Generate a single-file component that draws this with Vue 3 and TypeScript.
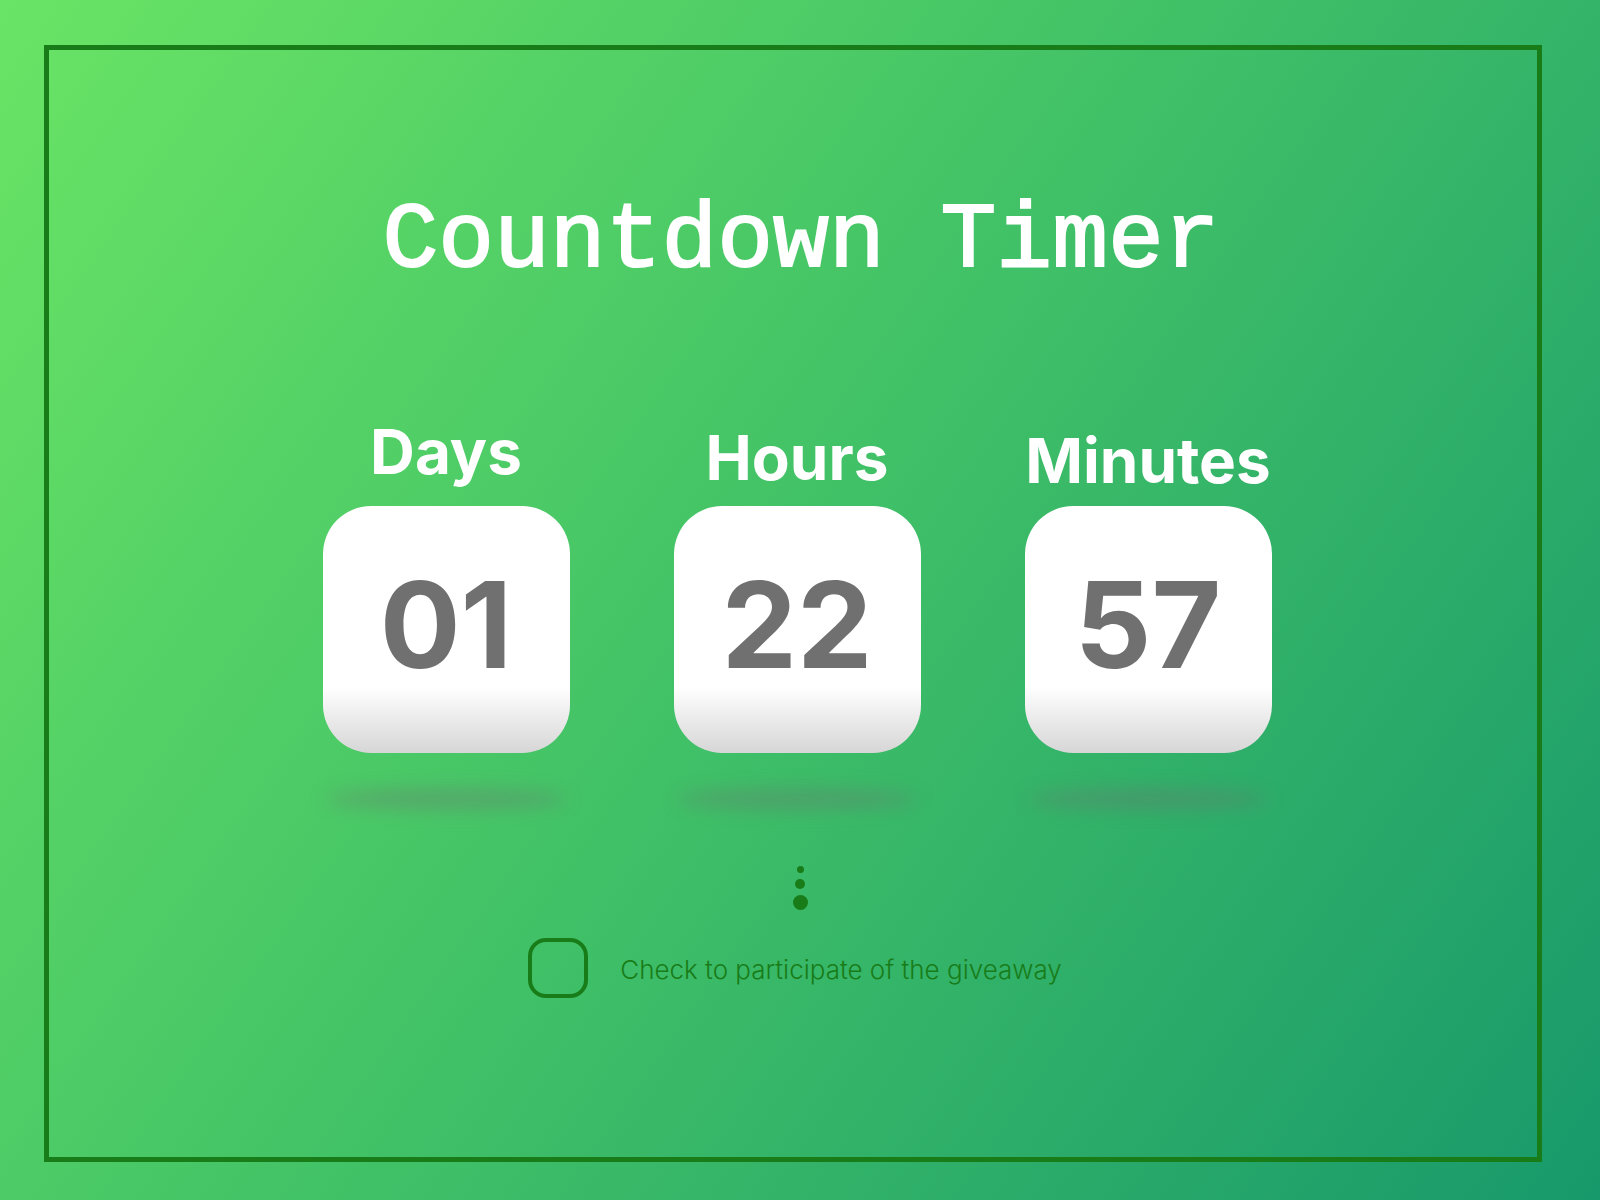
<script setup lang="ts">
import { ref } from 'vue'

interface Unit {
  label: string
  value: string
  step: 'high' | 'mid' | 'low'
}

const units: Unit[] = [
  { label: 'Days', value: '01', step: 'high' },
  { label: 'Hours', value: '22', step: 'mid' },
  { label: 'Minutes', value: '57', step: 'low' },
]

const participates = ref(false)
</script>

<template>
  <div class="page">
    <main class="frame">
      <h1 class="title">Countdown Timer</h1>

      <section class="units" aria-label="Time left">
        <div v-for="unit in units" :key="unit.label" class="unit">
          <h2 class="label" :class="unit.step">{{ unit.label }}</h2>
          <div class="card">{{ unit.value }}</div>
          <div class="shadow" aria-hidden="true"></div>
        </div>
      </section>

      <div class="dots" aria-hidden="true">
        <span class="dot small"></span>
        <span class="dot medium"></span>
        <span class="dot large"></span>
      </div>

      <label class="giveaway" for="giveaway">
        <input id="giveaway" v-model="participates" class="check" type="checkbox" />
        <span class="caption">Check to participate of the giveaway</span>
      </label>
    </main>
  </div>
</template>

<style>
body {
  margin: 0;
}
</style>

<style scoped>
.page {
  display: flex;
  box-sizing: border-box;
  min-height: 100vh;
  padding: 45px 58px 38px 44px;
  background: linear-gradient(125deg, #6ae465 0%, #40c067 50%, #18996b 100%);
  font-family: Inter, 'Liberation Sans', sans-serif;
}

.frame {
  display: flex;
  flex: 1;
  flex-direction: column;
  align-items: center;
  padding: 140px 0 40px;
  border: 5px solid #187c18;
}

.title {
  margin: 0 0 124px 16px;
  color: #fff;
  font-family: 'Liberation Mono', monospace;
  font-size: 93px;
  font-weight: 400;
  line-height: 104px;
  white-space: nowrap;
  -webkit-text-stroke: 2px #fff;
}

.units {
  display: flex;
  gap: 104px;
  margin-left: 8px;
}

.unit {
  display: flex;
  flex-direction: column;
  align-items: center;
  width: 247px;
}

.label {
  display: flex;
  align-items: flex-end;
  box-sizing: border-box;
  height: 88px;
  margin: 0;
  color: #fff;
  font-size: 62px;
  font-weight: 700;
  line-height: 68px;
}

.high {
  padding-bottom: 20px;
}

.mid {
  padding-bottom: 14px;
}

.low {
  padding-bottom: 11px;
}

.card {
  width: 100%;
  height: 247px;
  border-radius: 48px;
  background: linear-gradient(#fff 73%, #d6d6d6 100%);
  color: #707070;
  font-size: 120px;
  font-weight: 700;
  line-height: 238px;
  text-align: center;
}

.shadow {
  width: 240px;
  height: 20px;
  margin-top: 36px;
  border-radius: 50%;
  background: rgb(112 112 112 / 36%);
  filter: blur(9px);
}

.dots {
  display: flex;
  flex-direction: column;
  align-items: center;
  gap: 6px;
  margin: 57px 0 28px 14px;
}

.dot {
  border-radius: 50%;
  background: #187c18;
}

.small {
  width: 7px;
  height: 7px;
}

.medium {
  width: 10px;
  height: 10px;
}

.large {
  width: 15px;
  height: 15px;
}

.giveaway {
  display: flex;
  align-items: center;
  gap: 32px;
  margin-left: 4px;
  color: #187c18;
  font-size: 26px;
  font-weight: 300;
  line-height: 32px;
  cursor: pointer;
}

.caption {
  padding-top: 4px;
}

.check {
  appearance: none;
  box-sizing: border-box;
  width: 60px;
  height: 60px;
  margin: 0;
  border: 4px solid #187c18;
  border-radius: 18px;
  cursor: pointer;
}

.check:checked {
  background: #187c18;
}
</style>
